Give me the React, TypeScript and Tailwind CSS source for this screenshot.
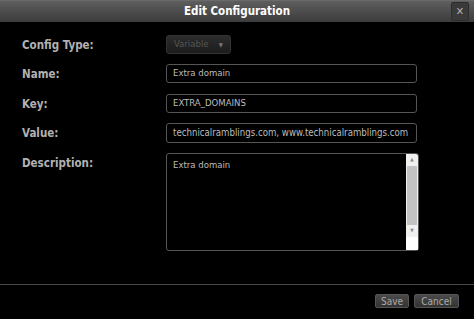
import React from "react";

const font = { fontFamily: '"DejaVu Sans Condensed", "DejaVu Sans", Verdana, sans-serif', fontStretch: "condensed" as const };

function Row({ label, children, h }: { label: string; children: React.ReactNode; h: string }) {
  return (
    <div className={`flex items-start ${h}`}>
      <div className="w-[166px] shrink-0 pl-[22px] pt-[2px] text-[11.5px] font-bold text-[#b2b2b2]">{label}</div>
      {children}
    </div>
  );
}

export default function App() {
  return (
    <div className="w-[474px] h-[319px] bg-black flex flex-col overflow-hidden" style={font}>
      <div className="relative h-[22px] flex items-center justify-center bg-gradient-to-b from-[#5e5e5e] to-[#3c3c3c] border-t border-[#6a6a6a]">
        <span className="text-[11.5px] font-bold text-white">Edit Configuration</span>
        <div className="absolute right-[5px] top-[1px] w-[18px] h-[19px] rounded-[2px] bg-[#3a3a3a] border border-[#2c2c2c] flex items-center justify-center">
          <span className="text-[11px] font-bold text-[#b0b0b0] leading-none">✕</span>
        </div>
      </div>
      <div className="flex flex-col pt-[13px]">
        <Row label="Config Type:" h="h-[29px]">
          <div className="w-[65px] h-[19px] rounded-[3px] border border-[#333] bg-gradient-to-b from-[#2c2c2c] to-[#1c1c1c] flex items-center justify-between px-[7px]">
            <span className="text-[9.5px] text-[#555]">Variable</span>
            <span className="text-[6px] text-[#777]">▼</span>
          </div>
        </Row>
        <Row label="Name:" h="h-[30px]">
          <div className="w-[251px] h-[19px] rounded-[3px] border border-[#555] bg-black flex items-center px-[6px] text-[9.5px] text-[#bcbcbc]">Extra domain</div>
        </Row>
        <Row label="Key:" h="h-[29px]">
          <div className="w-[251px] h-[19px] rounded-[3px] border border-[#555] bg-black flex items-center px-[6px] text-[9.5px] text-[#bcbcbc]">EXTRA_DOMAINS</div>
        </Row>
        <Row label="Value:" h="h-[30px]">
          <div className="w-[251px] h-[20px] rounded-[3px] border border-[#555] bg-black flex items-center px-[6px] text-[9.6px] text-[#bcbcbc] whitespace-nowrap overflow-hidden">technicalramblings.com, www.technicalramblings.com</div>
        </Row>
        <Row label="Description:" h="h-[131px]">
          <div className="w-[253px] h-[98px] rounded-[3px] border border-[#555] bg-black flex">
            <div className="flex-1 px-[6px] pt-[4px] text-[9.5px] text-[#bcbcbc]">Extra domain</div>
            <div className="w-[12px] flex flex-col bg-[#f0f0f0] rounded-r-[2px]">
              <div className="h-[12px] flex items-center justify-center text-[5px] text-[#888]">▲</div>
              <div className="h-[59px] mx-[1px] bg-[#c2c2c2]"></div>
              <div className="h-[12px] flex items-center justify-center text-[5px] text-[#888]">▼</div>
              <div className="flex-1 bg-white"></div>
            </div>
          </div>
        </Row>
      </div>
      <div className="h-px bg-[#4a4a4a]"></div>
      <div className="flex justify-end gap-[5px] pr-[15px] pt-[9px]">
        <div className="h-[14px] w-[34px] rounded-[2px] border border-[#555] bg-gradient-to-b from-[#4a4a4a] to-[#333] flex items-center justify-center text-[10px] text-[#aaa]">Save</div>
        <div className="h-[14px] w-[45px] rounded-[2px] border border-[#555] bg-gradient-to-b from-[#4a4a4a] to-[#333] flex items-center justify-center text-[10px] text-[#aaa]">Cancel</div>
      </div>
    </div>
  );
}
